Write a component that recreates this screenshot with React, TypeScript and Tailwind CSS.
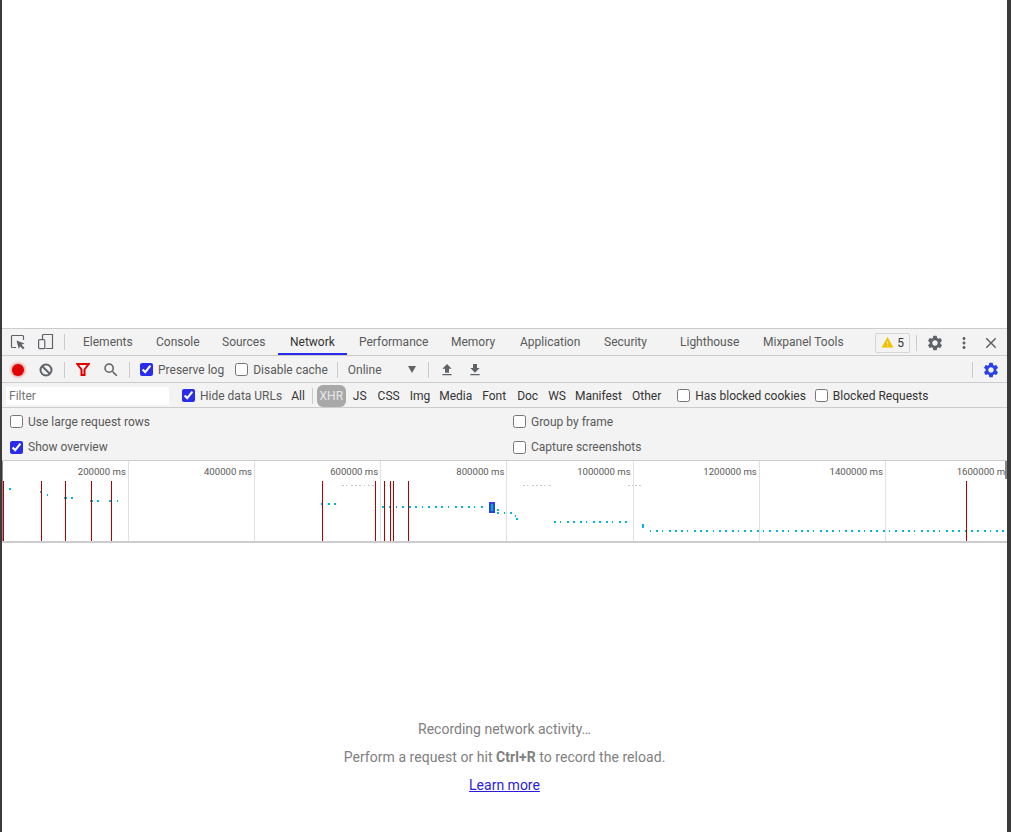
import { MdClose, MdFileDownload, MdFileUpload, MdMoreVert, MdSearch, MdSettings, MdWarning } from "react-icons/md";

const tabs = [
    { label: "Elements", w: "w-[73px]" },
    { label: "Console", w: "w-[66px]" },
    { label: "Sources", w: "w-[68px]" },
    { label: "Network", w: "w-[69px]" },
    { label: "Performance", w: "w-[92px]" },
    { label: "Memory", w: "w-[69px]" },
    { label: "Application", w: "w-[84px]" },
    { label: "Security", w: "w-[76px]" },
    { label: "Lighthouse", w: "w-[83px]" },
    { label: "Mixpanel Tools", w: "w-[104px]" },
];
const types = [
    { label: "JS", ml: "ml-[7px]" },
    { label: "CSS", ml: "ml-[11px]" },
    { label: "Img", ml: "ml-[10px]" },
    { label: "Media", ml: "ml-[9px]" },
    { label: "Font", ml: "ml-[10px]" },
    { label: "Doc", ml: "ml-[11px]" },
    { label: "WS", ml: "ml-[10px]" },
    { label: "Manifest", ml: "ml-[9px]" },
    { label: "Other", ml: "ml-[10px]" },
];
const ticks = ["200000 ms", "400000 ms", "600000 ms", "800000 ms", "1000000 ms", "1200000 ms", "1400000 ms", "1600000 ms"];
const redLines = [3, 41, 65, 91, 111, 322, 375, 384, 390, 393, 408, 966];

type Dot = { x: number; y: number; w: number };

function dotRun(from: number, to: number, step: number, y: number) {
    const dots: Dot[] = [];
    let i = 0;
    for (let x = from; x <= to; x += step) {
        dots.push({ x: Math.round(x), y, w: i % 4 === 1 ? 1 : 2 });
        i++;
    }
    return dots;
}

const blueDots: Dot[] = [
    { x: 9, y: 488, w: 2 },
    { x: 40, y: 491, w: 2 },
    { x: 47, y: 494, w: 1 },
    { x: 64, y: 497, w: 3 },
    { x: 71, y: 497, w: 2 },
    { x: 90, y: 500, w: 3 },
    { x: 97, y: 500, w: 2 },
    { x: 109, y: 500, w: 2 },
    { x: 117, y: 500, w: 1 },
    { x: 321, y: 503, w: 2 },
    { x: 328, y: 503, w: 2 },
    { x: 334, y: 503, w: 2 },
    { x: 382, y: 506, w: 3 },
    ...dotRun(389, 486, 6.55, 506),
    { x: 497, y: 509, w: 2 },
    { x: 497, y: 512, w: 2 },
    { x: 504, y: 512, w: 1 },
    { x: 510, y: 512, w: 2 },
    { x: 515, y: 515, w: 1 },
    { x: 516, y: 518, w: 2 },
    ...dotRun(554, 625, 6.45, 521),
    { x: 642, y: 524, w: 2 },
    { x: 642, y: 526, w: 2 },
    { x: 650, y: 530, w: 1 },
    ...dotRun(656, 1005, 6.3, 530),
];
const greyDots = [
    ...dotRun(342, 376, 4.3, 485),
    ...dotRun(384, 390, 5, 485),
    ...dotRun(523, 553, 4.3, 485),
    ...dotRun(628, 639, 3.6, 485),
];

function Sep({ className }: { className: string }) {
    return <div className={`w-px h-[16px] bg-[#ccc] shrink-0 ${className}`} />;
}

function Check({ label, checked, className, textClass }: { label: string; checked?: boolean; className?: string; textClass?: string }) {
    return (
        <label className={`flex items-center shrink-0 ${className ?? ""}`}>
            <input type="checkbox" defaultChecked={checked} className="w-[13px] h-[13px] m-0 accent-[#2a2cec]" />
            <span className={`ml-[5px] whitespace-nowrap ${textClass ?? "text-[#5a5a5a]"}`}>{label}</span>
        </label>
    );
}

export default function App() {
    return (
        <div className="w-[1011px] h-[832px] flex flex-col bg-white border-l-2 border-r-4 border-[#3a3a3a] overflow-hidden text-[12px] leading-none font-['Roboto',sans-serif]">
            <div className="h-[328px] shrink-0" />
            <div className="flex-1 flex flex-col min-h-0">
                <div className="h-[28px] shrink-0 flex items-center bg-[#f3f3f3] border-t border-b border-[#ccc] text-[#5a5a5a]">
                    <div className="w-[28px] ml-[2px] h-[27px] flex items-center justify-center shrink-0">
                        <svg width="16" height="16" viewBox="0 0 16 16" fill="none">
                            <path d="M6 13.5H2.5a1 1 0 0 1-1-1V2.5a1 1 0 0 1 1-1h10a1 1 0 0 1 1 1V6" stroke="#5f6368" strokeWidth="1.2" />
                            <path d="M6.5 6.5l8 3-3 1.2 3 3-1.5 1.5-3-3-1.2 2.8z" fill="#5f6368" />
                        </svg>
                    </div>
                    <div className="w-[27px] h-[27px] flex items-center justify-center shrink-0">
                        <svg width="16" height="16" viewBox="0 0 16 16" fill="none" stroke="#5f6368" strokeWidth="1.2">
                            <path d="M4.5 6V1.5a1 1 0 0 1 1-1h9v14h-7" />
                            <rect x="0.6" y="5.6" width="6.2" height="9" rx="1" />
                        </svg>
                    </div>
                    <Sep className="ml-[5px]" />
                    <div className="flex h-full ml-[6px]">
                        {tabs.map((tab) => (
                            <div
                                key={tab.label}
                                className={`pl-3 pt-px flex items-center whitespace-nowrap shrink-0 border-b-2 ${tab.w} ${tab.label === "Network" ? "border-[#2a2cec] text-[#333]" : "border-transparent"}`}
                            >
                                {tab.label}
                            </div>
                        ))}
                    </div>
                    <div className="ml-auto flex items-center pt-px">
                        <div className="h-[20px] w-[35px] flex items-center justify-center gap-[3px] border border-[#d5d5d5] rounded-[2px] text-[#333]">
                            <MdWarning size={13} className="text-[#f2c200]" />
                            <span>5</span>
                        </div>
                        <Sep className="ml-[6px]" />
                        <div className="w-[35px] flex justify-center"><MdSettings size={18} className="text-[#5f6368]" /></div>
                        <div className="w-[23px] flex justify-center"><MdMoreVert size={18} className="text-[#5f6368]" /></div>
                        <div className="w-[32px] flex justify-center"><MdClose size={18} className="text-[#5f6368]" /></div>
                    </div>
                </div>

                <div className="h-[27px] shrink-0 flex items-center pt-px bg-[#f3f3f3] border-b border-[#ccc] text-[#5a5a5a]">
                    <div className="w-[28px] ml-[2px] flex justify-center shrink-0">
                        <div className="w-[12px] h-[12px] rounded-full bg-[#e00000] shadow-[0_0_3px_1px_rgba(230,0,0,0.45)]" />
                    </div>
                    <div className="w-[28px] flex justify-center shrink-0">
                        <svg width="14" height="14" viewBox="0 0 14 14" fill="none" stroke="#5f6368" strokeWidth="2">
                            <circle cx="7" cy="7" r="5.5" />
                            <path d="M3 3l8 8" />
                        </svg>
                    </div>
                    <Sep className="ml-[4px]" />
                    <div className="w-[28px] ml-[4px] flex justify-center shrink-0">
                        <svg width="14" height="13" viewBox="0 0 14 13" fill="none" stroke="#e00000" strokeWidth="2">
                            <path d="M1.2 1h11.6L8.5 6.5V12h-3V6.5z" />
                        </svg>
                    </div>
                    <div className="w-[28px] flex justify-center shrink-0"><MdSearch size={18} className="text-[#5f6368]" /></div>
                    <Sep className="ml-[4px]" />
                    <Check label="Preserve log" checked className="ml-[10px]" />
                    <Check label="Disable cache" className="ml-[11px]" />
                    <Sep className="ml-[9px]" />
                    <span className="ml-[10px] w-[60px]">Online</span>
                    <span className="w-0 h-0 border-l-[4px] border-r-[4px] border-t-[7px] border-l-transparent border-r-transparent border-t-[#5f6368]" />
                    <Sep className="ml-[12px]" />
                    <div className="w-[28px] ml-[4px] flex justify-center shrink-0"><MdFileUpload size={16} className="text-[#5f6368]" /></div>
                    <div className="w-[28px] flex justify-center shrink-0"><MdFileDownload size={16} className="text-[#5f6368]" /></div>
                    <Sep className="ml-auto" />
                    <div className="w-[34px] pl-[2px] flex justify-center shrink-0"><MdSettings size={18} className="text-[#2a40ec]" /></div>
                </div>

                <div className="h-[25px] shrink-0 flex items-center pt-px bg-[#f3f3f3] border-b border-[#ccc] text-[#333]">
                    <div className="w-[163px] h-[18px] ml-[4px] pl-[3px] bg-white flex items-center text-[#757575] shrink-0">Filter</div>
                    <Check label="Hide data URLs" checked className="ml-[13px]" />
                    <span className="ml-[9px]">All</span>
                    <Sep className="ml-[7px]" />
                    <div className="ml-[4px] w-[29px] h-[22px] rounded-[6px] bg-[#a8a8a8] text-[#e8e8e8] flex items-center justify-center shrink-0">XHR</div>
                    {types.map((t) => (
                        <span key={t.label} className={t.ml}>{t.label}</span>
                    ))}
                    <Check label="Has blocked cookies" className="ml-[16px]" textClass="text-[#333]" />
                    <Check label="Blocked Requests" className="ml-[9px]" textClass="text-[#333]" />
                </div>

                <div className="h-[53px] shrink-0 grid grid-cols-[503px_1fr] grid-rows-2 items-center pt-px pl-[8px] bg-[#f3f3f3] border-b border-[#ccc]">
                    <Check label="Use large request rows" />
                    <Check label="Group by frame" />
                    <Check label="Show overview" checked />
                    <Check label="Capture screenshots" />
                </div>

                <div className="relative h-[82px] shrink-0 pl-[0.7px] border-b-2 border-[#ccc] overflow-hidden">
                    <div className="flex h-full text-[#5a5a5a] text-[9.6px]">
                        {ticks.map((tick) => (
                            <div key={tick} className="w-[126.2px] h-full shrink-0 border-r border-[#e0e0e0] pr-[2px] pt-[6px] text-right whitespace-nowrap last:border-r-0">
                                {tick}
                            </div>
                        ))}
                    </div>
                    <svg className="absolute left-[-2px] top-[-461px]" width="1011" height="543" viewBox="0 0 1011 543" shapeRendering="crispEdges">
                        {greyDots.map((d, i) => (
                            <rect key={i} x={d.x} y={d.y} width={d.w} height="1" fill="#c8c8c8" />
                        ))}
                        {blueDots.map((d, i) => (
                            <rect key={i} x={d.x} y={d.y} width={d.w} height="2" fill="#00b8d4" />
                        ))}
                        {redLines.map((x) => (
                            <rect key={x} x={x} y="481" width="1" height="60" fill="#b40000" />
                        ))}
                        <rect x="489" y="502" width="6" height="11" fill="#2a40ec" />
                        <rect x="491" y="504" width="2" height="7" fill="#00b8a0" />
                        <rect x="2" y="461" width="1" height="80" fill="#8a8a8a" />
                        <rect x="1005" y="461" width="2" height="18" fill="#8a8a8a" />
                    </svg>
                </div>

                <div className="flex-1 flex flex-col items-center justify-end pb-[33px] text-[14px] text-[#808080]">
                    <div className="h-[28px] flex items-center">Recording network activity…</div>
                    <div className="h-[28px] flex items-center whitespace-pre tracking-[0.05px]">Perform a request or hit <b className="font-bold">Ctrl+R</b> to record the reload.</div>
                    <div className="h-[28px] flex items-center text-[#2a1cd8] underline">Learn more</div>
                </div>
            </div>
        </div>
    );
}
